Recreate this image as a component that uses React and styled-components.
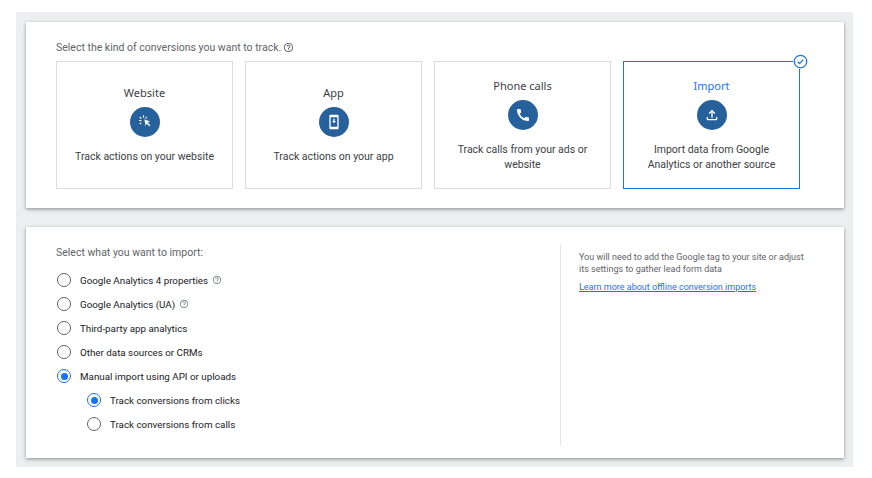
import React from "react";
import styled, { createGlobalStyle } from "styled-components";

const Global = createGlobalStyle`
  html, body { margin: 0; background: #fff; font-family: Roboto, "Noto Sans", Arial, sans-serif; }
`;

const Backdrop = styled.div`
  margin: 12px 0 0 16px;
  width: 837px;
  height: 455px;
  background: #eceef0;
  padding: 10px 0 0 10px;
  box-sizing: border-box;
  display: flex;
  flex-direction: column;
  gap: 19px;
`;

const Card = styled.div`
  width: 818px;
  height: ${p => p.$h}px;
  background: #fff;
  box-shadow: 0 1px 3px rgba(0,0,0,0.3), 0 2px 5px rgba(0,0,0,0.12);
  box-sizing: border-box;
`;

const TopCard = styled(Card)`
  padding: 18px 0 0 30px;
`;

const Prompt = styled.div`
  font-size: 10.5px;
  color: #5f6368;
  display: flex;
  align-items: center;
  gap: 2px;
  height: 14px;
`;

const Tiles = styled.div`
  display: grid;
  grid-template-columns: repeat(4, 177px);
  gap: 12px;
  margin-top: 7px;
`;

const Tile = styled.div`
  position: relative;
  height: 128px;
  box-sizing: border-box;
  border: ${p => (p.$sel ? "1.5px solid #1a73e8" : "1px solid #dadce0")};
  display: flex;
  flex-direction: column;
  align-items: center;
  justify-content: center;
  text-align: center;
  padding: 0 12px;
`;

const TileTitle = styled.div`
  font-size: 11px;
  font-weight: 500;
  color: ${p => (p.$sel ? "#1a73e8" : "#3c4043")};
  line-height: 14px;
  -webkit-text-stroke: 0;
  font-family: "Noto Sans", Roboto, sans-serif;
  font-weight: 400;
`;

const IconCircle = styled.div`
  width: 30px;
  height: 30px;
  border-radius: 50%;
  background: #27619c;
  display: flex;
  align-items: center;
  justify-content: center;
  margin: 7px 0 12px;
`;

const TileDesc = styled.div`
  font-size: 10.5px;
  color: #3c4043;
  line-height: 15px;
`;

const Check = styled.div`
  position: absolute;
  top: -8px;
  right: -9px;
  width: 15px;
  height: 15px;
  border-radius: 50%;
  background: #fff;
  display: flex;
  align-items: center;
  justify-content: center;
`;

const BottomCard = styled(Card)`
  display: flex;
  padding: 18px 0 13px 30px;
`;

const Left = styled.div`
  width: 504px;
  border-right: 1px solid #e3e3e3;
`;

const Options = styled.div`
  display: flex;
  flex-direction: column;
  gap: 10px;
  margin-top: 14px;
`;

const Option = styled.label`
  display: flex;
  align-items: center;
  gap: 9px;
  padding-left: ${p => (p.$sub ? 31 : 1)}px;
  font-size: 9.8px;
  color: #202124;
  height: 14px;
`;

const HelpWrap = styled.span`
  display: flex;
  margin-left: -5px;
`;

const Radio = styled.span`
  width: 14px;
  height: 14px;
  box-sizing: border-box;
  border-radius: 50%;
  border: 1.5px solid ${p => (p.$on ? "#1a73e8" : "#5f6368")};
  display: flex;
  align-items: center;
  justify-content: center;
  flex: none;
  &::after {
    content: "";
    width: 7px;
    height: 7px;
    border-radius: 50%;
    background: ${p => (p.$on ? "#1a73e8" : "transparent")};
  }
`;

const Right = styled.div`
  padding: 6px 0 0 18px;
  width: 228px;
  font-size: 9px;
  color: #5f6368;
  line-height: 12px;
`;

const Link = styled.a`
  display: block;
  margin-top: 6px;
  color: #1a73e8;
  text-decoration: underline;
`;

const Help = ({ s = 10, c = "#5f6368" }) => (
  <svg width={s} height={s} viewBox="0 0 24 24" fill={c}>
    <path d="M11 18h2v-2h-2v2zm1-16C6.48 2 2 6.48 2 12s4.48 10 10 10 10-4.48 10-10S17.52 2 12 2zm0 18c-4.41 0-8-3.59-8-8s3.59-8 8-8 8 3.59 8 8-3.59 8-8 8zm0-14c-2.21 0-4 1.790-4 4h2c0-1.1.9-2 2-2s2 .9 2 2c0 2-3 1.75-3 5h2c0-2.25 3-2.5 3-5 0-2.21-1.79-4-4-4z" />
  </svg>
);

const icons = {
  web: (
    <svg width="16" height="16" viewBox="0 0 24 24" fill="#fff">
      <path d="M11 8l9 3.5-4 1.3 4 4-1.6 1.6-4-4-1.3 4z" />
      <rect x="9" y="2" width="1.6" height="3.5" />
      <rect x="3" y="9" width="3.5" height="1.6" />
      <rect x="4.5" y="4" width="1.6" height="3.5" transform="rotate(-45 5.3 5.7)" />
      <rect x="13" y="4" width="1.6" height="3" transform="rotate(45 13.8 5.5)" />
      <rect x="4.5" y="12.5" width="1.6" height="3" transform="rotate(45 5.3 14)" />
    </svg>
  ),
  app: (
    <svg width="16" height="16" viewBox="0 0 24 24" fill="#fff">
      <path d="M17 1H7c-1.1 0-2 .9-2 2v18c0 1.1.9 2 2 2h10c1.1 0 2-.9 2-2V3c0-1.1-.9-2-2-2zm0 18H7V5h10v14z" />
      <path d="M11 7h2v4h2l-3 3-3-3h2z" />
    </svg>
  ),
  phone: (
    <svg width="16" height="16" viewBox="0 0 24 24" fill="#fff">
      <path d="M20.01 15.38c-1.23 0-2.42-.2-3.530-.56a.977.977 0 0 0-1.01.24l-1.57 1.97c-2.83-1.35-5.48-3.9-6.89-6.83l1.95-1.66c.27-.28.35-.67.24-1.02-.37-1.11-.56-2.3-.56-3.53 0-.54-.45-.99-.99-.99H4.19C3.65 3 3 3.24 3 3.99 3 13.28 10.73 21 20.01 21c.71 0 .99-.63.99-1.18v-3.45c0-.54-.45-.99-.99-.99z" />
    </svg>
  ),
  upload: (
    <svg width="16" height="16" viewBox="0 0 24 24" fill="#fff">
      <path d="M18 15v3H6v-3H4v3c0 1.1.9 2 2 2h12c1.1 0 2-.9 2-2v-3h-2zM7 9l1.41 1.41L11 7.83V16h2V7.83l2.59 2.58L17 9l-5-5-5 5z" />
    </svg>
  ),
};

const tiles = [
  { t: "Website", i: "web", d: "Track actions on your website" },
  { t: "App", i: "app", d: "Track actions on your app" },
  { t: "Phone calls", i: "phone", d: ["Track calls from your ads or", "website"] },
  { t: "Import", i: "upload", d: ["Import data from Google", "Analytics or another source"], sel: true },
];

const opts = [
  { l: "Google Analytics 4 properties", h: true },
  { l: "Google Analytics (UA)", h: true },
  { l: "Third-party app analytics" },
  { l: "Other data sources or CRMs" },
  { l: "Manual import using API or uploads", on: true },
  { l: "Track conversions from clicks", on: true, sub: true },
  { l: "Track conversions from calls", sub: true },
];

export default function App() {
  return (
    <>
      <Global />
      <Backdrop>
        <TopCard $h={186}>
          <Prompt>
            Select the kind of conversions you want to track.
            <Help s={11} />
          </Prompt>
          <Tiles>
            {tiles.map(t => (
              <Tile key={t.t} $sel={t.sel}>
                <TileTitle $sel={t.sel}>{t.t}</TileTitle>
                <IconCircle>{icons[t.i]}</IconCircle>
                <TileDesc>
                  {Array.isArray(t.d) ? t.d.map(x => <div key={x}>{x}</div>) : t.d}
                </TileDesc>
                {t.sel && (
                  <Check>
                    <svg width="15" height="15" viewBox="0 0 24 24">
                      <circle cx="12" cy="12" r="10" fill="#fff" stroke="#1a73e8" strokeWidth="2" />
                      <path d="M7.5 12.5l3 3 6-6.5" fill="none" stroke="#1a73e8" strokeWidth="2" />
                    </svg>
                  </Check>
                )}
              </Tile>
            ))}
          </Tiles>
        </TopCard>
        <BottomCard $h={231}>
          <Left>
            <Prompt>Select what you want to import:</Prompt>
            <Options>
              {opts.map(o => (
                <Option key={o.l} $sub={o.sub}>
                  <Radio $on={o.on} />
                  <span>{o.l}</span>
                  {o.h && (
                    <HelpWrap>
                      <Help s={10} c="#80868b" />
                    </HelpWrap>
                  )}
                </Option>
              ))}
            </Options>
          </Left>
          <Right>
            You will need to add the Google tag to your site or adjust its settings to gather lead form data
            <Link href="#">Learn more about offline conversion imports</Link>
          </Right>
        </BottomCard>
      </Backdrop>
    </>
  );
}
